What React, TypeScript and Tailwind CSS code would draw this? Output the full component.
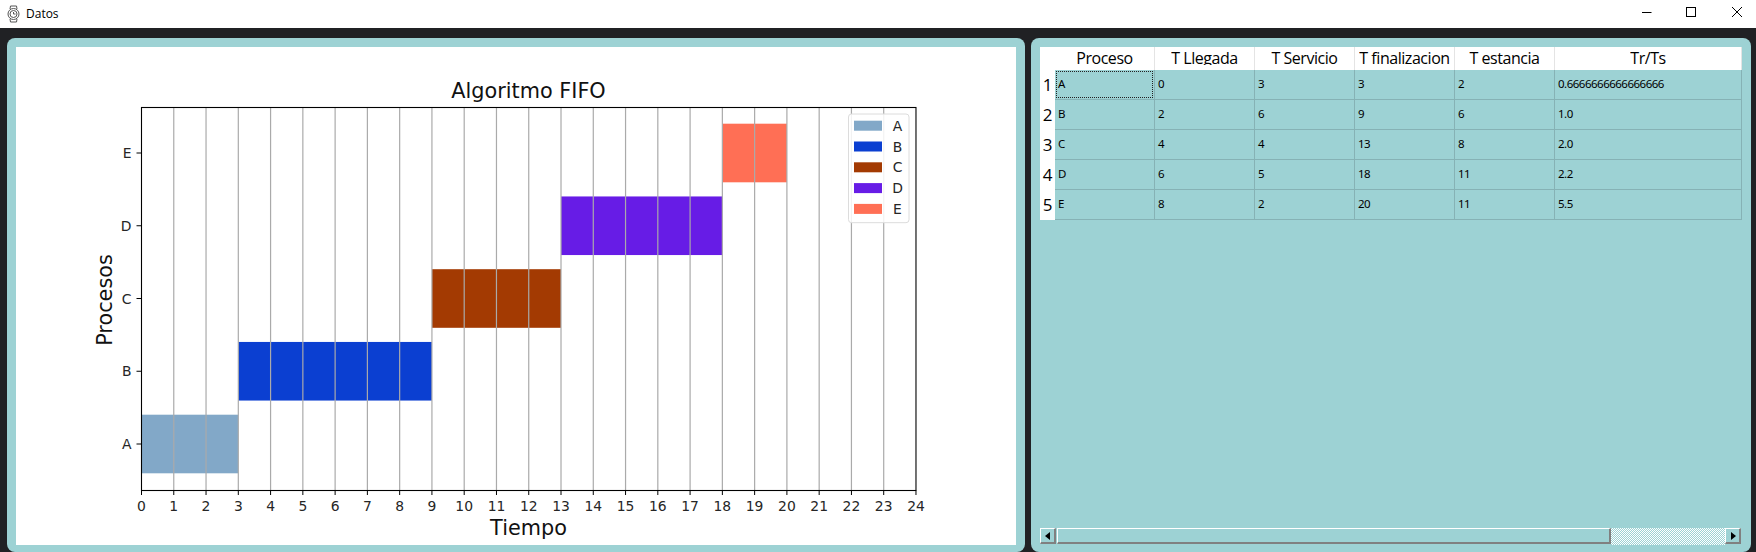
const xTicks = Array.from({ length: 25 }, (_, i) => i);
const X0 = 141.5;
const PX = 32.27;
const sx = (v: number) => X0 + v * PX;
const yFor = (i: number) => 444 - i * 72.75;
const bars = [
  { n: "A", s: 0, e: 3, c: "#82a8c8" },
  { n: "B", s: 3, e: 9, c: "#0b3fd1" },
  { n: "C", s: 9, e: 13, c: "#a33a02" },
  { n: "D", s: 13, e: 18, c: "#671ce6" },
  { n: "E", s: 18, e: 20, c: "#ff6f55" },
];
const headers = ["Proceso", "T Llegada", "T Servicio", "T finalizacion", "T estancia", "Tr/Ts"];
const rows = [
  ["A", "0", "3", "3", "2", "0.6666666666666666"],
  ["B", "2", "6", "9", "6", "1.0"],
  ["C", "4", "4", "13", "8", "2.0"],
  ["D", "6", "5", "18", "11", "2.2"],
  ["E", "8", "2", "20", "11", "5.5"],
];
const cols = "grid-cols-[15px_100px_100px_100px_100px_100px_187px]";

function Chart() {
  return (
    <svg viewBox="16 47 1000 498" className="block w-full h-full" fontFamily="DejaVu Sans, sans-serif" fill="#000">
      <rect x="16" y="47" width="1000" height="498" fill="#fff" />
      {bars.map((b, i) => (
        <rect key={b.n} x={sx(b.s)} y={yFor(i) - 29.3} width={(b.e - b.s) * PX} height={58.6} fill={b.c} />
      ))}
      {xTicks.slice(1, 24).map((t) => (
        <line key={t} x1={sx(t)} x2={sx(t)} y1="107" y2="490" stroke="#aaaaaa" strokeWidth="1.2" />
      ))}
      <rect x={X0} y="107.5" width={24 * PX} height="383" fill="none" stroke="#000" strokeWidth="1.1" />
      {xTicks.map((t) => (
        <g key={t}>
          <line x1={sx(t)} x2={sx(t)} y1="490.5" y2="495" stroke="#000" strokeWidth="1" />
          <text x={sx(t)} y="511" textAnchor="middle" fontSize="13.9" fill="#262626">{t}</text>
        </g>
      ))}
      {bars.map((b, i) => (
        <g key={b.n}>
          <line x1={X0 - 5} x2={X0} y1={yFor(i)} y2={yFor(i)} stroke="#000" strokeWidth="1" />
          <text x={X0 - 10} y={yFor(i) + 5} textAnchor="end" fontSize="13.9" fill="#262626">{b.n}</text>
        </g>
      ))}
      <text x="528.5" y="98" textAnchor="middle" fontSize="20.8" fill="#111">Algoritmo FIFO</text>
      <text x="528.5" y="535" textAnchor="middle" fontSize="20.8" fill="#111">Tiempo</text>
      <text transform="translate(112 300) rotate(-90)" textAnchor="middle" fontSize="20.8" fill="#111">Procesos</text>
      <rect x="848.5" y="114" width="60.5" height="108.7" rx="3" fill="#fff" fillOpacity="0.85" stroke="#dcdcdc" strokeWidth="1" />
      {bars.map((b, i) => (
        <g key={b.n}>
          <rect x="854" y={120.7 + i * 20.8} width="28" height="10" fill={b.c} />
          <text x="897.5" y={130.7 + i * 20.8} textAnchor="middle" fontSize="13.9" fill="#262626">{b.n}</text>
        </g>
      ))}
    </svg>
  );
}

function Grip({ dir }: { dir: "l" | "r" }) {
  return (
    <div className="w-[16px] h-[16px] shrink-0 border-t border-l border-t-white border-l-white border-r-2 border-b-2 border-r-[#808080] border-b-[#808080] flex items-center justify-center">
      <svg width="6" height="8" viewBox="0 0 6 8">
        <path d={dir === "l" ? "M5 0V8L0 4Z" : "M1 0V8L6 4Z"} fill="#000" />
      </svg>
    </div>
  );
}

export default function App() {
  return (
    <div className="w-[1756px] h-[552px] overflow-hidden bg-[#202124] flex flex-col font-['Noto_Sans',sans-serif]">
      <div className="h-[28px] shrink-0 bg-white flex items-center">
        <svg className="ml-[7px]" width="13" height="18" viewBox="0 0 13 18" fill="none" stroke="#555" strokeWidth="1">
          <path d="M3 4 L3.5 1 H9.5 L10 4 M3 14 L3.5 17 H9.5 L10 14" />
          <circle cx="6.5" cy="9" r="5.5" />
          <circle cx="6.5" cy="9" r="3.5" />
          <path d="M6.5 7V9H8.5" />
        </svg>
        <span className="ml-[6px] text-[12px] text-black font-['Open_Sans',sans-serif]">Datos</span>
        <div className="ml-auto mr-[-4px] flex items-center">
          <svg width="46" height="28" viewBox="0 0 46 28" stroke="#000" fill="none">
            <path d="M20 12.5H29.5" />
          </svg>
          <svg width="46" height="28" viewBox="0 0 46 28" stroke="#000" fill="none">
            <rect x="18.5" y="7.5" width="9" height="9" />
          </svg>
          <svg width="46" height="28" viewBox="0 0 46 28" stroke="#000" fill="none">
            <path d="M18 7L28 17M28 7L18 17" />
          </svg>
        </div>
      </div>
      <div className="flex-1 flex pt-[10px] pl-[7px] pr-[6px] gap-[6px] min-h-0">
        <div className="w-[1018px] bg-[#9dd2d4] rounded-[8px] pt-[9px] pb-[7px] px-[9px] flex">
          <div className="w-[1000px] h-[498px]">
            <Chart />
          </div>
        </div>
        <div className="flex-1 bg-[#9dd2d4] rounded-[8px] pt-[9px] pb-[7px] pl-[9px] pr-[9px] flex flex-col justify-between">
          <div className={`grid ${cols} w-[702px] text-black`}>
            <div className="bg-white h-[23px]" />
            {headers.map((h) => (
              <div key={h} className="bg-white h-[23px] border-r border-[#e4e4e4] flex justify-center">
                <span className="block h-[18px] pt-[2px] overflow-hidden text-[16px] leading-[18px] tracking-[-0.45px] whitespace-nowrap font-['Open_Sans',sans-serif]">
                  {h}
                </span>
              </div>
            ))}
            {rows.map((r, i) => (
              <div key={r[0]} className="contents">
                <div className="bg-white h-[30px] flex items-center justify-center text-[17px] font-['Open_Sans',sans-serif]">{i + 1}</div>
                {r.map((c, j) => (
                  <div key={j} className="h-[30px] pb-[1px] border-r border-b border-[#86b2b5] pl-[3px] flex items-center text-[11.5px] tracking-[-0.5px] whitespace-nowrap relative">
                    {c}
                    {i === 0 && j === 0 ? (
                      <div className="absolute left-[1px] top-[1px] right-[1px] bottom-[1px] border border-dotted border-[#222]" />
                    ) : null}
                  </div>
                ))}
              </div>
            ))}
          </div>
          <div className="w-[701px] h-[17px] flex items-stretch">
            <Grip dir="l" />
            <div className="w-[554px] ml-[1px] h-[16px] border-t border-l border-t-white border-l-white border-r-2 border-b-2 border-r-[#808080] border-b-[#808080]" />
            <div className="flex-1 bg-[repeating-conic-gradient(#ffffff_0_25%,#9dd2d4_0_50%)] bg-[length:2px_2px]" />
            <Grip dir="r" />
          </div>
        </div>
      </div>
    </div>
  );
}
